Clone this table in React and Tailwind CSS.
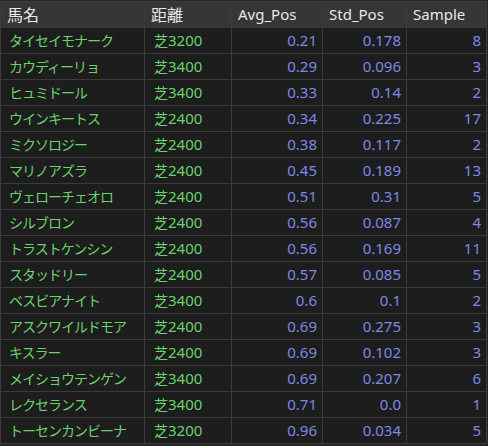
import React from "react";

const rows = [
  ["タイセイモナーク", "芝3200", "0.21", "0.178", "8"],
  ["カウディーリョ", "芝3400", "0.29", "0.096", "3"],
  ["ヒュミドール", "芝3400", "0.33", "0.14", "2"],
  ["ウインキートス", "芝2400", "0.34", "0.225", "17"],
  ["ミクソロジー", "芝2400", "0.38", "0.117", "2"],
  ["マリノアズラ", "芝2400", "0.45", "0.189", "13"],
  ["ヴェローチェオロ", "芝2400", "0.51", "0.31", "5"],
  ["シルブロン", "芝2400", "0.56", "0.087", "4"],
  ["トラストケンシン", "芝2400", "0.56", "0.169", "11"],
  ["スタッドリー", "芝2400", "0.57", "0.085", "5"],
  ["ベスビアナイト", "芝3400", "0.6", "0.1", "2"],
  ["アスクワイルドモア", "芝2400", "0.69", "0.275", "3"],
  ["キスラー", "芝2400", "0.69", "0.102", "3"],
  ["メイショウテンゲン", "芝3400", "0.69", "0.207", "6"],
  ["レクセランス", "芝3400", "0.71", "0.0", "1"],
  ["トーセンカンビーナ", "芝3200", "0.96", "0.034", "5"],
];

const headers = ["馬名", "距離", "Avg_Pos", "Std_Pos", "Sample"];

export default function App() {
  return (
    <div className="w-[488px] h-[446px] bg-[#262626] pt-px overflow-hidden font-['Noto_Sans','Noto_Sans_CJK_JP',sans-serif]">
      <div className="w-[487px] grid grid-cols-[143px_86px_90px_83px_79px] gap-px bg-[#3b3b3b] p-px">
        {headers.map((h, i) => (
          <div
            key={h}
            className={
              "h-[25px] bg-[#363636] text-[#e8e8e8] leading-[25px] pl-[6px] pr-[6px] whitespace-nowrap " +
              (i < 2 ? "text-[16px] font-['Noto_Sans_CJK_JP',sans-serif]" : "text-[15px]")
            }
          >
            {h}
          </div>
        ))}
        {rows.map((r, i) => (
          <React.Fragment key={i}>
            <div className="h-[25px] bg-[#1d1d1d] text-[#6bd36b] text-[14px] tracking-[-1px] leading-[25px] pl-[8px] whitespace-nowrap font-['Noto_Sans_CJK_JP',sans-serif]">
              {r[0]}
            </div>
            <div className="h-[25px] bg-[#1d1d1d] text-[#6bd36b] text-[15px] leading-[25px] pl-[9px] whitespace-nowrap">
              <span className="font-['Noto_Sans_CJK_JP',sans-serif] text-[14px]">{r[1].slice(0, 1)}</span>
              {r[1].slice(1)}
            </div>
            <div className="h-[25px] bg-[#1d1d1d] text-[#7d88e6] text-[15px] leading-[25px] pr-[5px] text-right">
              {r[2]}
            </div>
            <div className="h-[25px] bg-[#1d1d1d] text-[#7d88e6] text-[15px] leading-[25px] pr-[5px] text-right">
              {r[3]}
            </div>
            <div className="h-[25px] bg-[#1d1d1d] text-[#7d88e6] text-[15px] leading-[25px] pr-[5px] text-right">
              {r[4]}
            </div>
          </React.Fragment>
        ))}
      </div>
    </div>
  );
}
